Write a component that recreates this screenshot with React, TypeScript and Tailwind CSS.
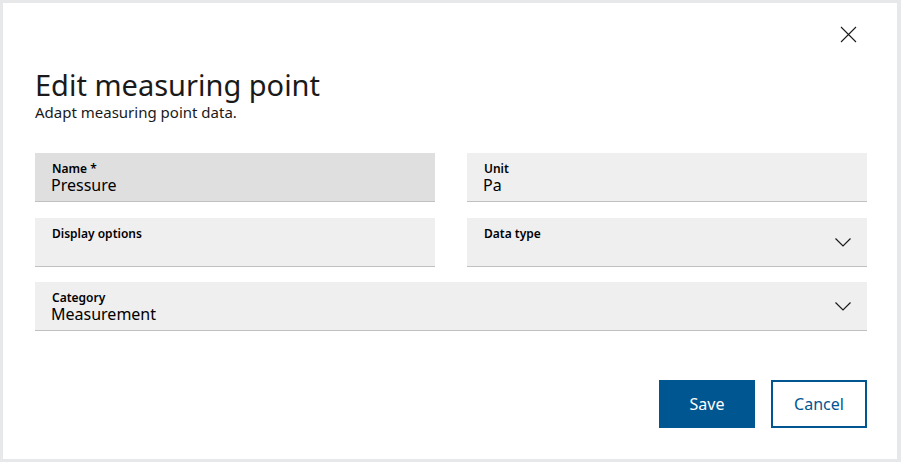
import React from 'react';

const Chevron = () => (
  <svg width="16" height="9" viewBox="0 0 16 9" fill="none" className="shrink-0">
    <path d="M0.5 0.5 L8 8 L15.5 0.5" stroke="#1a1a1a" strokeWidth="1.2" />
  </svg>
);

const Field = ({
  label,
  value,
  select,
  active,
  className = '',
}: {
  label: string;
  value?: string;
  select?: boolean;
  active?: boolean;
  className?: string;
}) => (
  <div
    className={`flex h-[49px] items-center border-b border-[#bfc0c2] pl-4 pr-4 ${
      active ? 'bg-[#dfdfe0]' : 'bg-[#efeff0]'
    } ${className}`}
  >
    <div className="flex h-full flex-1 flex-col pt-[9px]">
      <span className="pl-px text-[12px] leading-[13px] font-semibold text-[#000]">{label}</span>
      {value && <span className="mt-[1px] text-[16px] leading-[18px] text-[#000]">{value}</span>}
    </div>
    {select && <Chevron />}
  </div>
);

export default function App() {
  return (
    <div className="h-[462px] w-[901px] bg-[#e6e8ea] pt-[3px] pb-[3px] pl-[3px] pr-[4px] font-['Noto_Sans',sans-serif]">
      <div className="flex h-full flex-col bg-white pl-8 pr-[30px]">
        <div className="flex justify-end pt-[23px] pr-[10px]">
          <button className="flex h-[17px] w-[17px] items-center justify-center">
            <svg width="17" height="17" viewBox="0 0 17 17" fill="none">
              <path d="M1 1 L16 16 M16 1 L1 16" stroke="#1a1a1a" strokeWidth="1.1" />
            </svg>
          </button>
        </div>
        <h1 className="mt-[25px] text-[29px] leading-[34px] text-[#1a1a1a]">Edit measuring point</h1>
        <p className="text-[15px] leading-[20px] text-[#1a1a1a]">Adapt measuring point data.</p>

        <div className="mt-[31px] grid grid-cols-2 gap-x-8 gap-y-4">
          <Field label="Name *" value="Pressure" active />
          <Field label="Unit" value="Pa" />
          <Field label="Display options" />
          <Field label="Data type" select />
          <Field label="Category" value="Measurement" select className="col-span-2 -mt-px" />
        </div>

        <div className="mt-[49px] flex justify-end gap-4">
          <button className="h-12 w-24 bg-[#005691] text-[16px] text-white">Save</button>
          <button className="h-12 w-24 border-2 border-[#005691] bg-white text-[16px] text-[#005691]">
            Cancel
          </button>
        </div>
      </div>
    </div>
  );
}
